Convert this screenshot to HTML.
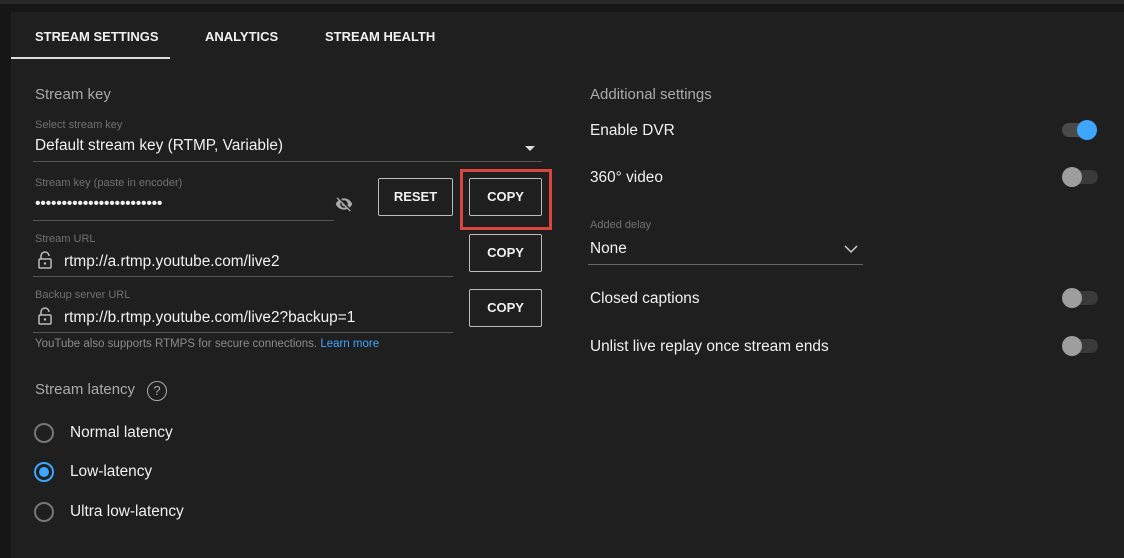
<!DOCTYPE html>
<html><head><meta charset="utf-8"><style>
*{margin:0;padding:0;box-sizing:border-box}
body{width:1124px;height:558px;background:#161616;font-family:"Liberation Sans",Roboto,sans-serif;position:relative;overflow:hidden;color:#f1f1f1}
.top{position:absolute;left:0;top:0;width:1124px;height:4px;background:#282828}
.panel{position:absolute;left:11px;top:12px;width:1113px;height:546px;background:#1f1f1f}
.a{position:absolute;white-space:nowrap}
.tab{font-size:13px;font-weight:bold;color:#f1f1f1;top:29px}
.h{font-size:15px;color:#aaa}
.lbl{font-size:11px;color:#717171}
.val{font-size:15.4px;color:#f1f1f1}
.line{position:absolute;height:1px;background:#555}
.btn{position:absolute;border:1px solid #bbb;border-radius:2px;font-size:13px;font-weight:bold;color:#f1f1f1;text-align:center;line-height:36px;height:38px}
.tog{position:absolute;width:34px;height:14px;border-radius:7px;background:#4a4a4a}
.tog i{position:absolute;top:-3px;width:20px;height:20px;border-radius:50%;background:#9e9e9e}
.radio{position:absolute;width:20px;height:20px;border-radius:50%;border:2px solid #777}
</style></head><body>
<div class="top"></div>
<div class="panel"></div>
<div class="a tab" style="left:35px">STREAM SETTINGS</div>
<div class="a tab" style="left:205px">ANALYTICS</div>
<div class="a tab" style="left:325px">STREAM HEALTH</div>
<div style="position:absolute;left:11px;top:57px;width:159px;height:2px;background:#ddd"></div>

<div class="a h" style="left:35px;top:86px">Stream key</div>
<div class="a lbl" style="left:35px;top:119px">Select stream key</div>
<div class="a val" style="left:35px;top:137px">Default stream key (RTMP, Variable)</div>
<div class="a" style="left:525px;top:146px;width:0;height:0;border-left:5px solid transparent;border-right:5px solid transparent;border-top:5px solid #ddd"></div>
<div class="line" style="left:33px;top:161px;width:509px"></div>

<div class="a lbl" style="left:35px;top:177px">Stream key (paste in encoder)</div>
<div class="a" style="left:35px;top:195px;font-size:16px;letter-spacing:-0.3px;color:#eee">••••••••••••••••••••••••</div>
<svg class="a" style="left:334px;top:195px" width="20" height="18" viewBox="0 0 24 24"><path fill="#aaa" d="M12 7c2.76 0 5 2.24 5 5 0 .65-.13 1.26-.36 1.83l2.92 2.92A11.8 11.8 0 0 0 23 12c-1.73-4.390-6-7.5-11-7.5-1.4 0-2.74.25-3.98.7l2.16 2.16C10.74 7.130 11.35 7 12 7zM2 4.27l2.28 2.28.46.46A11.8 11.8 0 0 0 1 12c1.73 4.39 6 7.5 11 7.5 1.55 0 3.03-.3 4.38-.84l.42.42L19.73 22 21 20.73 3.27 3 2 4.27zM7.53 9.8l1.55 1.55A2.8 2.8 0 0 0 9 12c0 1.66 1.34 3 3 3 .22 0 .44-.03.65-.08l1.55 1.55A4.96 4.96 0 0 1 7 12c0-.79.2-1.53.53-2.2z"/></svg>
<div class="line" style="left:33px;top:220px;width:301px"></div>
<div class="btn" style="left:378px;top:178px;width:75px">RESET</div>
<div class="btn" style="left:469px;top:178px;width:73px">COPY</div>
<div style="position:absolute;left:460px;top:169px;width:92px;height:61px;border:3px solid #d9453f"></div>

<div class="a lbl" style="left:35px;top:233px">Stream URL</div>
<svg class="a" style="left:37px;top:251px" width="16" height="18" viewBox="0 0 16 18"><path d="M4 8V5a4 4 0 0 1 8 0" fill="none" stroke="#bbb" stroke-width="1.5"/><rect x="2" y="8" width="12" height="9" rx="1" fill="none" stroke="#bbb" stroke-width="1.5"/><circle cx="8" cy="12.5" r="1.2" fill="#bbb"/></svg>
<div class="a val" style="left:64px;top:253px">rtmp://a.rtmp.youtube.com/live2</div>
<div class="line" style="left:33px;top:276px;width:420px"></div>
<div class="btn" style="left:469px;top:234px;width:73px">COPY</div>

<div class="a lbl" style="left:35px;top:289px">Backup server URL</div>
<svg class="a" style="left:37px;top:307px" width="16" height="18" viewBox="0 0 16 18"><path d="M4 8V5a4 4 0 0 1 8 0" fill="none" stroke="#bbb" stroke-width="1.5"/><rect x="2" y="8" width="12" height="9" rx="1" fill="none" stroke="#bbb" stroke-width="1.5"/><circle cx="8" cy="12.5" r="1.2" fill="#bbb"/></svg>
<div class="a val" style="left:64px;top:309px">rtmp://b.rtmp.youtube.com/live2?backup=1</div>
<div class="line" style="left:33px;top:332px;width:420px"></div>
<div class="btn" style="left:469px;top:289px;width:73px">COPY</div>
<div class="a" style="left:35px;top:338px;font-size:11.5px;color:#8a8a8a">YouTube also supports RTMPS for secure connections. <span style="color:#3ea6ff">Learn more</span></div>

<div class="a h" style="left:35px;top:381px">Stream latency</div>
<div class="a" style="left:147px;top:381px;width:20px;height:20px;border:1.5px solid #aaa;border-radius:50%;font-size:13px;color:#aaa;text-align:center;line-height:17px">?</div>

<div class="radio" style="left:34px;top:423px"></div>
<div class="a val" style="left:70px;top:424px">Normal latency</div>
<div class="radio" style="left:34px;top:462px;border-color:#3ea6ff"><div style="position:absolute;left:3px;top:3px;width:10px;height:10px;border-radius:50%;background:#3ea6ff"></div></div>
<div class="a val" style="left:70px;top:463px">Low-latency</div>
<div class="radio" style="left:34px;top:502px"></div>
<div class="a val" style="left:70px;top:503px">Ultra low-latency</div>

<div class="a h" style="left:590px;top:86px">Additional settings</div>
<div class="a val" style="left:590px;top:122px">Enable DVR</div>
<div class="tog" style="left:1062px;top:123px"><i style="left:15px;background:#3ea6ff"></i></div>
<div class="a val" style="left:590px;top:169px">360° video</div>
<div class="tog" style="left:1064px;top:170px;background:#3a3a3a"><i style="left:-2px"></i></div>
<div class="a lbl" style="left:590px;top:219px">Added delay</div>
<div class="a val" style="left:590px;top:240px">None</div>
<svg class="a" style="left:844px;top:244px" width="14" height="10" viewBox="0 0 14 10"><path d="M1 2l6 6 6-6" fill="none" stroke="#ccc" stroke-width="1.5"/></svg>
<div class="line" style="left:588px;top:264px;width:275px;background:#666"></div>
<div class="a val" style="left:590px;top:290px">Closed captions</div>
<div class="tog" style="left:1064px;top:291px;background:#3a3a3a"><i style="left:-2px"></i></div>
<div class="a val" style="left:590px;top:338px">Unlist live replay once stream ends</div>
<div class="tog" style="left:1064px;top:339px;background:#3a3a3a"><i style="left:-2px"></i></div>
</body></html>
